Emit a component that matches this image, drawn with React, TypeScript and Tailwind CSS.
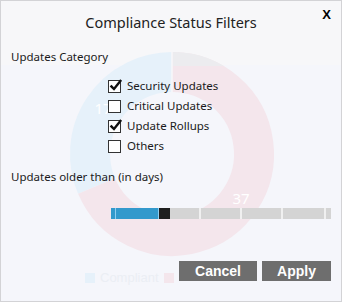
import { useState } from 'react';

const font = { fontFamily: '"Noto Sans", "Open Sans", sans-serif' };
const arial = { fontFamily: '"Liberation Sans", Arial, sans-serif' };

// faded chart that sits behind the dialog content
function GhostDonut() {
  const cx = 171;
  const cy = 153;
  const r = 82;
  const w = 40;
  const a = (113 * Math.PI) / 180;
  const ex = cx - r * Math.sin(a);
  const ey = cy - r * Math.cos(a);
  const pink = `M ${cx} ${cy - r} A ${r} ${r} 0 1 1 ${ex} ${ey}`;
  return (
    <svg className="absolute left-0 top-0" width="342" height="302">
      <defs>
        <clipPath id="topband">
          <rect x="172" y="0" width="170" height="65" />
        </clipPath>
      </defs>
      <path d={`M ${cx} ${cy - r} A ${r} ${r} 0 0 0 ${ex} ${ey}`} fill="none" stroke="#e6f1fa" strokeWidth={w} />
      <path d={pink} fill="none" stroke="#f4e6ec" strokeWidth={w} />
      <path d={pink} fill="none" stroke="#ececef" strokeWidth={w} clipPath="url(#topband)" />
      <line x1={cx} y1={cy - r - w / 2} x2={cx} y2={cy - r + w / 2} stroke="#f7f7fa" strokeWidth="1.5" />
      <text x="102" y="113" fontSize="15" fill="#ffffff" textAnchor="middle" style={font}>17</text>
      <text x="240" y="203" fontSize="15" fill="#ffffff" textAnchor="middle" style={font}>37</text>
      <rect x="84" y="272" width="10" height="10" fill="#e6f1fa" />
      <text x="99" y="281" fontSize="13" fill="#ebeef4" style={arial}>Compliant</text>
      <rect x="163" y="272" width="10" height="10" fill="#f4e6ec" />
    </svg>
  );
}

function CheckBox({ checked, label, onToggle }: { checked: boolean; label: string; onToggle: () => void }) {
  return (
    <div className="flex h-[20px] items-center cursor-pointer" onClick={onToggle}>
      <div className="relative h-[13px] w-[13px] border border-[#333333] bg-white">
        {checked && (
          <svg className="absolute left-[0px] top-[-2px]" width="14" height="14" viewBox="0 0 14 14">
            <path d="M2.4 7.4 L5 10 L11.4 2" fill="none" stroke="#111" strokeWidth="2.4" strokeLinecap="square" />
          </svg>
        )}
      </div>
      <span className="ml-[6px] text-[11.5px] leading-[16px] text-[#1a1a1a]" style={font}>{label}</span>
    </div>
  );
}

function DaySlider() {
  return (
    <div className="ml-[110px] flex h-[11px] w-[220px]">
      <div className="w-[4px] bg-[#3399cc]" />
      <div className="w-[1px] bg-[#8fcdf0]" />
      <div className="w-[42px] bg-[#3399cc]" />
      <div className="w-[1px] bg-[#8fcdf0]" />
      <div className="w-[11px] bg-[#1f1f1f]" />
      <div className="w-[29px] bg-[#d4d4d4]" />
      <div className="w-[2px] bg-[#f0f0f0]" />
      <div className="w-[39px] bg-[#d4d4d4]" />
      <div className="w-[2px] bg-[#f0f0f0]" />
      <div className="w-[39px] bg-[#d4d4d4]" />
      <div className="w-[2px] bg-[#f0f0f0]" />
      <div className="w-[41px] bg-[#d4d4d4]" />
      <div className="w-[2px] bg-[#f0f0f0]" />
      <div className="flex-1 bg-[#d4d4d4]" />
    </div>
  );
}

export default function App() {
  const [checks, setChecks] = useState([true, false, true, false]);
  const labels = ['Security Updates', 'Critical Updates', 'Update Rollups', 'Others'];

  return (
    <div className="relative h-[302px] w-[342px] overflow-hidden border border-[#d3d3d6] bg-[#f5f6fb]" style={font}>
      <div className="absolute left-0 top-0 h-[64px] w-full bg-[#f7f7f9]" />
      <GhostDonut />
      <button className="absolute right-[10px] top-[4px] text-[13px] font-bold text-black" style={arial}>
        X
      </button>

      <div className="relative flex flex-col px-[10px] pt-[9px]">
        <h2 className="text-center text-[14.5px] leading-[24px] text-[#222222]">Compliance Status Filters</h2>

        <p className="mt-[15px] text-[11.5px] leading-[16px] text-[#1a1a1a]">Updates Category</p>

        <div className="mt-[11px] flex flex-col pl-[97px]">
          {labels.map((l, i) => (
            <CheckBox
              key={l}
              label={l}
              checked={checks[i]}
              onToggle={() => setChecks(checks.map((c, j) => (j === i ? !c : c)))}
            />
          ))}
        </div>

        <p className="mt-[13px] text-[11.5px] leading-[16px] text-[#1a1a1a]">Updates older than (in days)</p>

        <div className="-mx-[10px] mt-[23px]">
          <DaySlider />
        </div>

        <div className="mt-[42px] flex justify-end gap-[5px]">
          <button className="h-[20px] w-[78px] bg-[#6e6e6e] text-[14px] font-bold text-white" style={arial}>
            Cancel
          </button>
          <button className="h-[20px] w-[69px] bg-[#6e6e6e] text-[14px] font-bold text-white" style={arial}>
            Apply
          </button>
        </div>
      </div>
    </div>
  );
}
